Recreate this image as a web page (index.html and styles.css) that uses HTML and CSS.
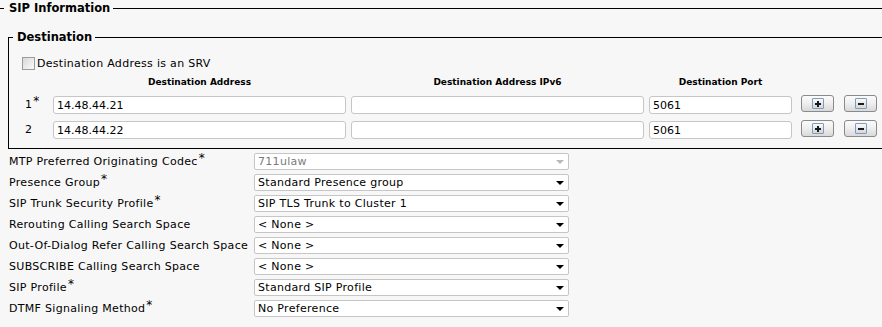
FILE: index.html
```html
<!DOCTYPE html>
<html>
<head>
<meta charset="utf-8">
<link rel="stylesheet" href="styles.css">
</head>
<body>
<fieldset class="sip">
  <legend class="sip-legend">SIP Information</legend>
  <fieldset class="dest">
    <legend class="dest-legend">Destination</legend>
    <label class="srv"><span class="cb"></span>Destination Address is an SRV</label>
    <div class="dest-grid">
      <span></span>
      <span class="hd">Destination Address</span>
      <span class="hd">Destination Address IPv6</span>
      <span class="hd">Destination Port</span>
      <span></span>
      <span></span>

      <span class="num">1<span class="req">*</span></span>
      <input class="txt" type="text" value="14.48.44.21">
      <input class="txt" type="text" value="">
      <input class="txt" type="text" value="5061">
      <button class="btn"><span class="ico plus"></span></button>
      <button class="btn"><span class="ico minus"></span></button>

      <span class="num">2</span>
      <input class="txt" type="text" value="14.48.44.22">
      <input class="txt" type="text" value="">
      <input class="txt" type="text" value="5061">
      <button class="btn"><span class="ico plus"></span></button>
      <button class="btn"><span class="ico minus"></span></button>
    </div>
  </fieldset>
  <div class="fields">
    <div class="lbl">MTP Preferred Originating Codec<span class="req">*</span></div>
    <div class="sel disabled"><select disabled><option>711ulaw</option></select></div>
    <div class="lbl">Presence Group<span class="req">*</span></div>
    <div class="sel"><select><option>Standard Presence group</option></select></div>
    <div class="lbl">SIP Trunk Security Profile<span class="req">*</span></div>
    <div class="sel"><select><option>SIP TLS Trunk to Cluster 1</option></select></div>
    <div class="lbl">Rerouting Calling Search Space</div>
    <div class="sel"><select><option>&lt; None &gt;</option></select></div>
    <div class="lbl">Out-Of-Dialog Refer Calling Search Space</div>
    <div class="sel"><select><option>&lt; None &gt;</option></select></div>
    <div class="lbl">SUBSCRIBE Calling Search Space</div>
    <div class="sel"><select><option>&lt; None &gt;</option></select></div>
    <div class="lbl">SIP Profile<span class="req">*</span></div>
    <div class="sel"><select><option>Standard SIP Profile</option></select></div>
    <div class="lbl">DTMF Signaling Method<span class="req">*</span></div>
    <div class="sel"><select><option>No Preference</option></select></div>
  </div>
</fieldset>
</body>
</html>
```
FILE: styles.css
```css
html, body {
  margin: 0;
  padding: 0;
}
body {
  background: #f7f7f7;
  font-family: "DejaVu Sans", Verdana, sans-serif;
  font-size: 11px;
  letter-spacing: 0.3px;
  color: #000;
  width: 882px;
  height: 327px;
  overflow: hidden;
}
.sip {
  margin: 0;
  border: 0;
  border-top: 1px solid #000;
  padding: 12px 0 0 4px;
  min-width: 0;
}
.sip-legend {
  padding: 0 3px 0 5px;
  font-weight: bold;
  font-size: 11.5px;
  letter-spacing: 0;
  line-height: 17px;
  height: 17px;
}
.dest {
  margin: 0 0 0 4px;
  border: 1px solid #000;
  border-right: 0;
  padding: 10px 0 9px 4px;
  min-width: 0;
}
.dest-legend {
  padding: 0 3px 0 4px;
  font-weight: bold;
  font-size: 11.5px;
  letter-spacing: 0;
  line-height: 16px;
  height: 16px;
}
.srv {
  display: flex;
  align-items: center;
  height: 16px;
  margin-left: 9px;
}
.cb {
  width: 13px;
  height: 13px;
  box-sizing: border-box;
  border: 1px solid #9c9c9c;
  background: linear-gradient(135deg, #d8d8d8, #fbfbfb);
  margin-right: 2px;
}
.dest-grid {
  display: grid;
  grid-template-columns: 26px 293px 293px 143px 37px 38px;
  grid-template-rows: 13px 18px 18px;
  column-gap: 5px;
  row-gap: 7px;
  margin: 5px 0 0 9px;
}
.hd {
  font-weight: bold;
  font-size: 9px;
  letter-spacing: 0;
  text-align: center;
  line-height: 13px;
}
.num {
  padding-left: 3px;
  line-height: 18px;
}
.req {
  font-size: 12px;
  vertical-align: 3px;
  line-height: 0;
  margin-left: 1px;
}
.txt {
  box-sizing: border-box;
  width: 100%;
  height: 18px;
  margin: 0;
  border: 1px solid #c6c6c6;
  border-radius: 3px;
  background: #fff;
  padding: 0 3px;
  font: inherit;
  letter-spacing: 0;
  color: #000;
  outline: none;
}
.btn {
  justify-self: end;
  align-self: start;
  margin: -1px 0 0 0;
  width: 33px;
  height: 17px;
  padding: 0;
  box-sizing: border-box;
  border: 1px solid #8a8a8a;
  border-radius: 3px;
  background: linear-gradient(#fbfbfb, #f0f0f0 45%, #d9d9d9);
  display: flex;
  align-items: center;
  justify-content: center;
}
.ico {
  position: relative;
  width: 12px;
  height: 11px;
  box-sizing: border-box;
  border: 1px solid #7c9cc2;
  border-radius: 1px;
  background: linear-gradient(#fafafa, #d6d6d6);
}
.ico::before,
.ico::after {
  content: "";
  position: absolute;
  background: #1a1a1a;
}
.ico::before {
  left: 2px;
  top: 3.5px;
  width: 6px;
  height: 2px;
}
.plus::after {
  left: 4px;
  top: 1.5px;
  width: 2px;
  height: 6px;
}
.minus::after {
  display: none;
}
.fields {
  display: grid;
  grid-template-columns: 245px 315px;
  grid-auto-rows: 21px;
  align-items: center;
  margin: 2px 0 0 5px;
}
.lbl {
  white-space: nowrap;
}
.sel {
  position: relative;
  height: 17px;
}
.sel select {
  -webkit-appearance: none;
  appearance: none;
  box-sizing: border-box;
  width: 100%;
  height: 17px;
  margin: 0;
  border: 1px solid #c6c6c6;
  border-radius: 2px;
  background: #fff;
  padding: 0 0 0 3px;
  font: inherit;
  letter-spacing: 0.3px;
  color: #000;
  outline: none;
}
.sel::after {
  content: "";
  position: absolute;
  right: 5px;
  top: 7px;
  border-left: 4px solid transparent;
  border-right: 4px solid transparent;
  border-top: 4px solid #000;
}
.sel.disabled select {
  color: #7a7a7a;
  background: #fff;
  opacity: 1;
}
.sel.disabled::after {
  border-top-color: #b8b8b8;
}
```
